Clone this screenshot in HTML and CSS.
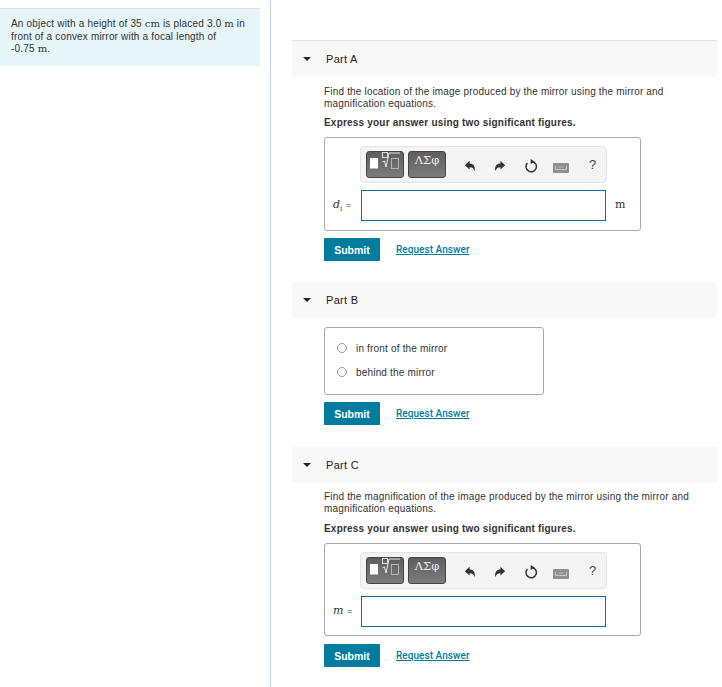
FILE: index.html
```html
<!DOCTYPE html>
<html lang="en">
<head>
    <meta charset="UTF-8">
    <meta name="viewport" content="width=device-width, initial-scale=1.0">
    <title>Convex mirror problem</title>
    <link rel="stylesheet" href="styles.css">
</head>
<body>
    <svg class="defs" width="0" height="0">
        <symbol id="math" viewBox="0 0 36 25"><rect x="3" y="6" width="8" height="10.5" fill="#fff"/><rect x="15.5" y="0.5" width="5" height="5" fill="none" stroke="#ddd"/><path d="M15.5 10 L17.5 9 L19 15 L22 1 H33" fill="none" stroke="#e8e8e8" stroke-width="1"/><rect x="24.5" y="6.5" width="7" height="10" fill="none" stroke="#b5b5b5"/></symbol>
        <symbol id="undo" viewBox="0 0 14 14"><path d="M1 6 L6.5 1 V4.2 C10.5 4.2 13.5 7 12.5 13 C11.5 9.8 10 8.4 6.5 8.4 V11 Z"/></symbol>
        <symbol id="redo" viewBox="0 0 14 14"><path d="M13 6 L7.5 1 V4.2 C3.5 4.2 0.5 7 1.5 13 C2.5 9.8 4 8.4 7.5 8.4 V11 Z"/></symbol>
        <symbol id="reset" viewBox="0 0 14 14"><path d="M8 2.4 A5.2 5.2 0 1 1 3.4 4" fill="none" stroke="#333" stroke-width="1.5"/><path d="M6.6 0 L10.6 2.6 L6.6 5 Z"/></symbol>
        <symbol id="keys" viewBox="0 0 16 10"><rect width="16" height="10" rx="1" fill="#8f8f8f"/><path d="M2.5 3 V6.5 H13.5 V3" fill="none" stroke="#c8c8c8" stroke-width="1"/><rect x="5.5" y="3" width="5" height="2" fill="#a4a4a4"/></symbol>
    </svg>

    <div class="page">
        <div class="left">
            <div class="statement">
                An object with a height of 35 <span class="unit">cm</span> is placed 3.0 <span class="unit">m</span> in front of a convex mirror with a focal length of<br>-0.75 <span class="unit">m</span>.
            </div>
        </div>

        <div class="right">
            <section class="part first">
                <h2 class="part-title"><span class="caret"></span>Part A</h2>
                <div class="part-body">
                    <p class="prompt">Find the location of the image produced by the mirror using the mirror and magnification equations.</p>
                    <p class="instruction">Express your answer using two significant figures.</p>
                    <div class="answer-box">
                        <div class="toolbar">
                            <span class="tool-btn tool-math"><svg class="math-ico"><use href="#math"/></svg></span>
                            <span class="tool-btn tool-greek">&Lambda;&Sigma;&phi;</span>
                            <svg class="ico ico-undo"><use href="#undo"/></svg>
                            <svg class="ico ico-redo"><use href="#redo"/></svg>
                            <svg class="ico ico-reset"><use href="#reset"/></svg>
                            <svg class="ico-keys"><use href="#keys"/></svg>
                            <span class="help">?</span>
                        </div>
                        <div class="input-row">
                            <span class="var"><i>d</i><sub>i</sub> <span class="eq">=</span></span>
                            <span class="input"></span>
                            <span class="unit unit-after">m</span>
                        </div>
                    </div>
                    <div class="actions">
                        <button class="submit">Submit</button>
                        <a class="request" href="#">Request Answer</a>
                    </div>
                </div>
            </section>

            <section class="part">
                <h2 class="part-title"><span class="caret"></span>Part B</h2>
                <div class="part-body part-body-b">
                    <div class="choice-box">
                        <label class="choice"><span class="radio"></span>in front of the mirror</label>
                        <label class="choice"><span class="radio"></span>behind the mirror</label>
                    </div>
                    <div class="actions">
                        <button class="submit">Submit</button>
                        <a class="request" href="#">Request Answer</a>
                    </div>
                </div>
            </section>

            <section class="part">
                <h2 class="part-title"><span class="caret"></span>Part C</h2>
                <div class="part-body part-body-c">
                    <p class="prompt">Find the magnification of the image produced by the mirror using the mirror and magnification equations.</p>
                    <p class="instruction">Express your answer using two significant figures.</p>
                    <div class="answer-box">
                        <div class="toolbar">
                            <span class="tool-btn tool-math"><svg class="math-ico"><use href="#math"/></svg></span>
                            <span class="tool-btn tool-greek">&Lambda;&Sigma;&phi;</span>
                            <svg class="ico ico-undo"><use href="#undo"/></svg>
                            <svg class="ico ico-redo"><use href="#redo"/></svg>
                            <svg class="ico ico-reset"><use href="#reset"/></svg>
                            <svg class="ico-keys"><use href="#keys"/></svg>
                            <span class="help">?</span>
                        </div>
                        <div class="input-row">
                            <span class="var"><i>m</i> <span class="eq">=</span></span>
                            <span class="input"></span>
                        </div>
                    </div>
                    <div class="actions">
                        <button class="submit">Submit</button>
                        <a class="request" href="#">Request Answer</a>
                    </div>
                </div>
            </section>
        </div>
    </div>
</body>
</html>
```

FILE: styles.css
```css
html, body { margin: 0; height: 687px; overflow: hidden; background: #fff; }
body { font-family: "Liberation Sans", Arial, sans-serif; color: #333; }
.defs { position: absolute; }
.page { display: flex; height: 687px; }

.left { width: 270px; border-right: 1px solid #c3d5e6; padding-top: 8px; flex: none; }
.statement { width: 260px; height: 58px; padding: 9px 10px 0 11px; box-sizing: border-box; background: #e6f5f7; border-top: 1px solid #e2e2e2; font-size: 10px; line-height: 12.5px; letter-spacing: 0.18px; }
.unit { font-family: "DejaVu Serif", serif; font-size: 10px; line-height: 1; letter-spacing: 0; }

.right { flex: none; width: 425px; margin-left: 21px; padding-top: 40px; }
.part-title { display: flex; align-items: center; height: 36px; margin: 0; background: #f8f8f8; font-size: 11px; font-weight: normal; color: #222; letter-spacing: 0.3px; }
.first .part-title { border-top: 1px solid #e2e2e2; }
.caret { width: 0; height: 0; border-left: 4px solid transparent; border-right: 4px solid transparent; border-top: 4px solid #222; margin: 0 15px 0 11px; }

.part-body { padding: 9px 0 21px 32px; }
.part-body-b { padding-bottom: 22px; }
.part-body-c { padding-top: 8px; }
.prompt { margin: 0; font-size: 10px; line-height: 12px; letter-spacing: 0.18px; width: 372px; }
.instruction { margin: 6px 0 0; font-size: 10px; line-height: 13px; font-weight: bold; letter-spacing: 0.2px; }
.part-body-c .instruction { margin-top: 7px; }
.part-body-c .answer-box { height: 93px; }
.part-body-c .actions { margin-top: 8px; }

.answer-box { width: 317px; height: 94px; margin-top: 8px; box-sizing: border-box; border: 1px solid #a9a9a9; border-radius: 3px; padding: 8px 0 0 35px; }
.toolbar { display: flex; align-items: center; width: 247px; height: 37px; box-sizing: border-box; background: #f4f4f4; border: 1px solid #e4e4e4; border-radius: 4px; padding-left: 5px; }
.tool-btn { box-sizing: border-box; height: 27px; width: 38px; border-radius: 3px; border: 1px solid #444; background: linear-gradient(#5e5e5e, #7c7c7c); color: #eee; margin-top: -1px; }
.tool-greek { margin-left: 4px; font-family: "DejaVu Serif", serif; font-size: 11.5px; text-align: center; line-height: 17px; }
.math-ico { display: block; width: 36px; height: 25px; }

.ico { width: 12px; height: 12px; fill: #333; flex: none; margin-top: 2px; }
.ico-undo { margin-left: 18px; }
.ico-redo { margin-left: 18px; }
.ico-reset { margin-left: 18px; width: 14px; height: 14px; }
.ico-keys { width: 16px; height: 10px; margin: 6px 0 0 15px; flex: none; }
.help { margin-left: 20px; font-size: 13px; color: #444; }

.input-row { display: flex; align-items: center; margin: 7px 0 0 -35px; height: 31px; }
.var { width: 36px; box-sizing: border-box; padding: 0 0 3px 8px; font-family: "DejaVu Serif", serif; font-size: 11px; white-space: nowrap; }
.var sub { font-size: 7px; line-height: 0; }
.eq { font-family: "Liberation Sans", sans-serif; font-size: 9px; }
.input { width: 245px; height: 31px; box-sizing: border-box; border: 1px solid #00759a; background: #fff; }
.unit-after { margin: 0 0 3px 9px; font-size: 11px; }

.actions { display: flex; align-items: center; margin-top: 7px; }
.submit { width: 56px; height: 23px; padding: 0; border: none; border-radius: 1px; background: #007c9e; color: #fff; font-family: "Liberation Sans", Arial, sans-serif; font-size: 10.5px; font-weight: bold; }
.request { margin: -1px 0 0 16px; font-family: Roboto, sans-serif; font-size: 10px; font-weight: 500; color: #007c9e; letter-spacing: 0.05px; }

.choice-box { width: 220px; height: 68px; box-sizing: border-box; border: 1px solid #a9a9a9; border-radius: 3px; padding: 8px 0 0 12px; }
.choice { display: flex; align-items: center; height: 24px; font-size: 10px; letter-spacing: 0.18px; }
.radio { width: 10px; height: 10px; box-sizing: border-box; border: 1px solid #999; border-radius: 50%; margin-right: 9px; background: #fff; }
```
